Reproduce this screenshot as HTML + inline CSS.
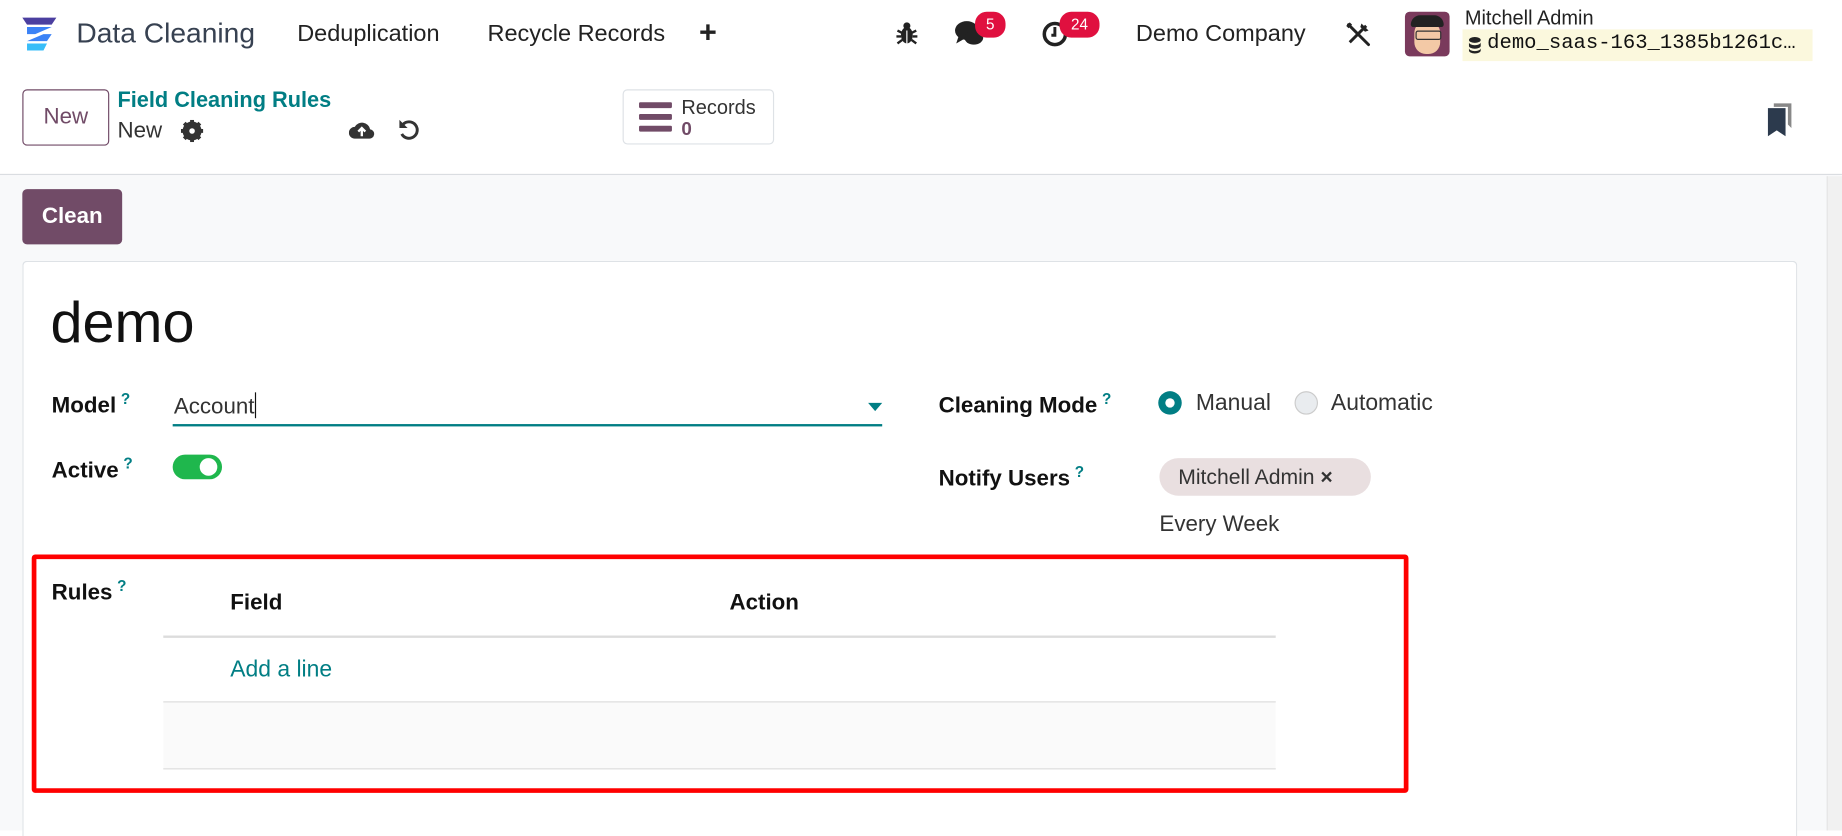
<!DOCTYPE html>
<html><head><meta charset="utf-8"><style>
html,body{margin:0;padding:0;width:1842px;height:831px;overflow:hidden;background:#fff}
#w{position:absolute;left:0;top:0;width:1568px;height:707px;transform:scale(1.1747);transform-origin:0 0;font-family:"Liberation Sans",sans-serif;color:#212529}
.a{position:absolute;white-space:nowrap}
.lbl{font-weight:bold;font-size:19px;color:#111}
.q{color:#017e84;font-size:13px;font-weight:bold;vertical-align:super;margin-left:4px}
</style></head><body><div id="w">
<!-- navbar -->
<svg class="a" style="left:18px;top:14px" width="31" height="30" viewBox="0 0 31 30"><path d="M1 1h29l-4 6H5z" fill="#4b3fa0"/><path d="M5 9h21l-14 6h14l-4 6H5l14-6H5z" fill="#3b82f6"/><path d="M5 23h17l-3 6H5z" fill="#38bdf8"/></svg>
<div class="a" style="left:65px;top:15px;font-size:24px;color:#374151">Data Cleaning</div>
<div class="a" style="left:253px;top:18px;font-size:20px;color:#222">Deduplication</div>
<div class="a" style="left:415px;top:18px;font-size:20px;color:#222">Recycle Records</div>
<div class="a" style="left:595px;top:12px;font-size:26px;font-weight:bold;color:#222">+</div>
<svg class="a" style="left:763px;top:18px" width="18" height="20" viewBox="0 0 18 20"><ellipse cx="9" cy="12" rx="5" ry="7" fill="#222"/><circle cx="9" cy="4" r="3" fill="#222"/><path d="M1 8l4 2M17 8l-4 2M0 13h4M18 13h-4M1 19l4-3M17 19l-4-3" stroke="#222" stroke-width="2"/><path d="M9 8v11" stroke="#fff" stroke-width="1"/></svg>
<svg class="a" style="left:812px;top:17px" width="26" height="24" viewBox="0 0 26 24"><ellipse cx="11" cy="9" rx="10" ry="8" fill="#222"/><path d="M4 14l-2 6 7-4z" fill="#222"/><ellipse cx="17" cy="15" rx="8" ry="6" fill="#222"/></svg>
<div class="a" style="left:830px;top:10px;background:#e0103f;color:#fff;font-size:13px;border-radius:10px;width:26px;height:22px;line-height:22px;text-align:center">5</div>
<svg class="a" style="left:886px;top:17px" width="24" height="24" viewBox="0 0 24 24"><circle cx="12" cy="12" r="9" fill="none" stroke="#222" stroke-width="3"/><path d="M12 6v7h-3" stroke="#222" stroke-width="2.5" fill="none"/></svg>
<div class="a" style="left:902px;top:10px;background:#e0103f;color:#fff;font-size:13px;border-radius:10px;width:34px;height:22px;line-height:22px;text-align:center">24</div>
<div class="a" style="left:967px;top:18px;font-size:20px;color:#222">Demo Company</div>
<svg class="a" style="left:1145px;top:18px" width="22" height="22" viewBox="0 0 22 22"><path d="M4 18L18 4" stroke="#222" stroke-width="2.5"/><path d="M14 2l6 6-3 1-4-4z" fill="#222"/><path d="M3 3l5 5M8 8l12 12" stroke="#222" stroke-width="2.5" stroke-linecap="round"/><path d="M1 4l3-3 2 2-3 3z" fill="#222"/></svg>
<div class="a" style="left:1196px;top:10px;width:38px;height:38px;border-radius:4px;background:#7a3a5c;overflow:hidden"><div style="position:absolute;left:8px;top:8px;width:22px;height:28px;border-radius:10px;background:#f3c9a6"></div><div style="position:absolute;left:5px;top:3px;width:28px;height:10px;border-radius:8px 8px 2px 2px;background:#222"></div><div style="position:absolute;left:9px;top:16px;width:20px;height:6px;border:1.5px solid #333;border-radius:2px"></div></div>
<div class="a" style="left:1247px;top:6px;font-size:17px;color:#222">Mitchell Admin</div>
<div class="a" style="left:1245px;top:25px;width:298px;height:27px;background:#fbf8dd"></div>
<svg class="a" style="left:1250px;top:31px" width="11" height="15" viewBox="0 0 11 15"><ellipse cx="5.5" cy="3" rx="5" ry="2.5" fill="#222"/><path d="M0.5 5v3a5 2.5 0 0 0 10 0V5a5 2.5 0 0 1-10 0zM0.5 10v2a5 2.5 0 0 0 10 0v-2a5 2.5 0 0 1-10 0z" fill="#222"/></svg>
<div class="a" style="left:1266px;top:27px;font-family:'Liberation Mono',monospace;font-size:17.5px;color:#111">demo_saas-163_1385b1261c…</div>
<!-- control panel -->
<div class="a" style="left:19px;top:76px;width:72px;height:46px;border:1px solid #714b67;border-radius:4px;color:#714b67;font-size:19px;line-height:46px;text-align:center;box-sizing:content-box">New</div>
<div class="a" style="left:100px;top:74px;font-size:18.5px;font-weight:bold;color:#017e84">Field Cleaning Rules</div>
<div class="a" style="left:100px;top:101px;font-size:19px;color:#333">New</div>
<svg class="a" style="left:154px;top:102px" width="19" height="19" viewBox="0 0 20 20"><circle cx="10" cy="10" r="6.5" fill="none" stroke="#333" stroke-width="4"/><path d="M10 0v20M0 10h20M3 3l14 14M17 3L3 17" stroke="#333" stroke-width="3.5"/><circle cx="10" cy="10" r="2.5" fill="#fff"/></svg>
<svg class="a" style="left:297px;top:101px" width="22" height="18" viewBox="0 0 22 18"><path d="M5 17a5 5 0 0 1 0-10 7 7 0 0 1 13 2 4 4 0 0 1-1 8z" fill="#333"/><path d="M11 15V8M8 11l3-3 3 3" stroke="#fff" stroke-width="2" fill="none"/></svg>
<svg class="a" style="left:339px;top:101px" width="18" height="19" viewBox="0 0 18 19"><path d="M4 5a7 7 0 1 1-1 8" stroke="#333" stroke-width="2.5" fill="none"/><path d="M1 1v7h7z" fill="#333"/></svg>
<div class="a" style="left:530px;top:76px;width:129px;height:47px;border:1px solid #dee2e6;border-radius:4px;box-sizing:border-box"></div>
<div class="a" style="left:544px;top:87px;width:28px;height:5px;background:#714b67;border-radius:1px"></div>
<div class="a" style="left:544px;top:97px;width:28px;height:5px;background:#714b67;border-radius:1px"></div>
<div class="a" style="left:544px;top:107px;width:28px;height:5px;background:#714b67;border-radius:1px"></div>
<div class="a" style="left:580px;top:82px;font-size:17px;color:#333">Records</div>
<div class="a" style="left:580px;top:102px;font-size:16px;font-weight:bold;color:#714b67">0</div>
<svg class="a" style="left:1503px;top:87px" width="24" height="30" viewBox="0 0 24 30"><path d="M7 1h15v21l-3-3V4H7z" fill="#888"/><path d="M2 5h15v24l-7.5-5L2 29z" fill="#2c3a4d"/></svg>
<!-- body -->
<div class="a" style="left:0;top:148px;width:1568px;height:1px;background:#dadde1"></div>
<div class="a" style="left:0;top:149px;width:1568px;height:558px;background:#f8f9fa"></div>
<div class="a" style="left:1555px;top:150px;width:13px;height:557px;background:#f1f1f1;border-left:1px solid #e5e5e5"></div>
<div class="a" style="left:19px;top:161px;width:85px;height:47px;background:#714b67;border-radius:4px;color:#fff;font-weight:bold;font-size:19px;line-height:48px;text-align:center">Clean</div>
<div class="a" style="left:19px;top:222px;width:1511px;height:490px;background:#fff;border:1px solid #dee2e6;border-bottom:none;border-radius:4px 4px 0 0;box-sizing:border-box"></div>
<div class="a" style="left:43px;top:247px;font-size:49px;color:#111">demo</div>
<div class="a lbl" style="left:44px;top:332px">Model<span class="q">?</span></div>
<div class="a" style="left:148px;top:334px;font-size:19px;color:#333">Account<span style="display:inline-block;width:1px;height:22px;background:#111;vertical-align:-4px"></span></div>
<div class="a" style="left:147px;top:361px;width:604px;height:1.5px;background:#017e84"></div>
<div class="a" style="left:739px;top:343px;width:0;height:0;border-left:6px solid transparent;border-right:6px solid transparent;border-top:7px solid #017e84"></div>
<div class="a lbl" style="left:44px;top:387px">Active<span class="q">?</span></div>
<div class="a" style="left:147px;top:387px;width:42px;height:21px;border-radius:11px;background:#1fb74d"></div>
<div class="a" style="left:170px;top:390px;width:15px;height:15px;border-radius:50%;background:#fff"></div>
<div class="a lbl" style="left:799px;top:332px">Cleaning Mode<span class="q">?</span></div>
<div class="a" style="left:986px;top:333px;width:20px;height:20px;border-radius:50%;background:#017e84"></div>
<div class="a" style="left:992px;top:339px;width:8px;height:8px;border-radius:50%;background:#fff"></div>
<div class="a" style="left:1018px;top:332px;font-size:19.5px;color:#333">Manual</div>
<div class="a" style="left:1102px;top:333px;width:18px;height:18px;border-radius:50%;background:#e9ecef;border:1px solid #ccc"></div>
<div class="a" style="left:1133px;top:332px;font-size:19.5px;color:#333">Automatic</div>
<div class="a lbl" style="left:799px;top:394px">Notify Users<span class="q">?</span></div>
<div class="a" style="left:987px;top:390px;width:180px;height:32px;border-radius:16px;background:#e9dfe0;font-size:18px;color:#333;line-height:32px;padding-left:16px;box-sizing:border-box">Mitchell Admin <b>×</b></div>
<div class="a" style="left:987px;top:436px;font-size:19px;color:#333">Every Week</div>
<!-- rules -->
<div class="a lbl" style="left:44px;top:491px">Rules<span class="q">?</span></div>
<div class="a lbl" style="left:196px;top:503px">Field</div>
<div class="a lbl" style="left:621px;top:503px">Action</div>
<div class="a" style="left:139px;top:541px;width:947px;height:1.5px;background:#dcdcdc"></div>
<div class="a" style="left:196px;top:559px;font-size:19.5px;color:#017e84">Add a line</div>
<div class="a" style="left:139px;top:597px;width:947px;height:56px;background:#fafafa;border-top:1.5px solid #dcdcdc;border-bottom:1.5px solid #dcdcdc"></div>
<div class="a" style="left:27px;top:472px;width:1172px;height:203px;border:4px solid #f00;border-radius:3px;box-sizing:border-box"></div>
</div></body></html>
